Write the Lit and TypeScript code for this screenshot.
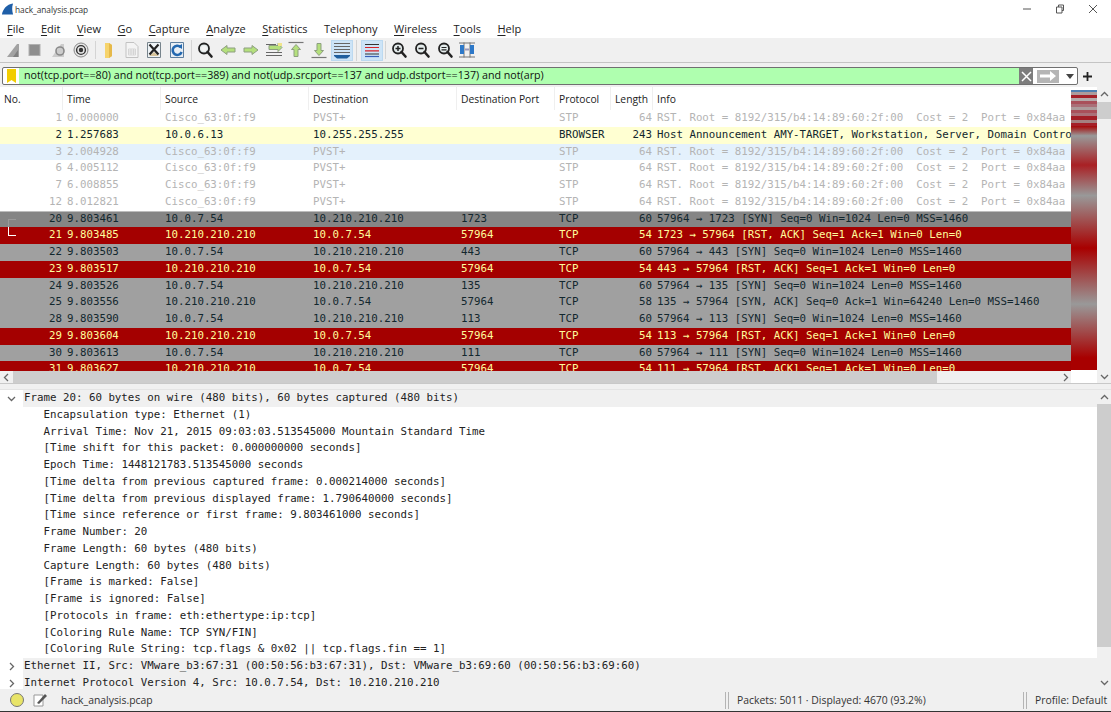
import { LitElement, html, css, svg } from "lit";
import { customElement } from "lit/decorators.js";

type Row = [string, string, string, string, string, string, string, string, string];
const stp = (n: string, t: string, k = "w"): Row => [k, n, t, "Cisco_63:0f:f9", "PVST+", "", "STP", "64", "RST. Root = 8192/315/b4:14:89:60:2f:00  Cost = 2  Port = 0x84aa"];
const a = "10.0.7.54", b = "10.210.210.210";
const rows: Row[] = [
  stp("1", "0.000000"),
  ["y", "2", "1.257683", "10.0.6.13", "10.255.255.255", "", "BROWSER", "243", "Host Announcement AMY-TARGET, Workstation, Server, Domain Controller"],
  stp("3", "2.004928", "b"),
  stp("6", "4.005112"),
  stp("7", "6.008855"),
  stp("12", "8.012821"),
  ["s", "20", "9.803461", a, b, "1723", "TCP", "60", "57964 → 1723 [SYN] Seq=0 Win=1024 Len=0 MSS=1460"],
  ["r2", "21", "9.803485", b, a, "57964", "TCP", "54", "1723 → 57964 [RST, ACK] Seq=1 Ack=1 Win=0 Len=0"],
  ["g", "22", "9.803503", a, b, "443", "TCP", "60", "57964 → 443 [SYN] Seq=0 Win=1024 Len=0 MSS=1460"],
  ["r2", "23", "9.803517", b, a, "57964", "TCP", "54", "443 → 57964 [RST, ACK] Seq=1 Ack=1 Win=0 Len=0"],
  ["g", "24", "9.803526", a, b, "135", "TCP", "60", "57964 → 135 [SYN] Seq=0 Win=1024 Len=0 MSS=1460"],
  ["g", "25", "9.803556", b, a, "57964", "TCP", "58", "135 → 57964 [SYN, ACK] Seq=0 Ack=1 Win=64240 Len=0 MSS=1460"],
  ["g", "28", "9.803590", a, b, "113", "TCP", "60", "57964 → 113 [SYN] Seq=0 Win=1024 Len=0 MSS=1460"],
  ["r2", "29", "9.803604", b, a, "57964", "TCP", "54", "113 → 57964 [RST, ACK] Seq=1 Ack=1 Win=0 Len=0"],
  ["g", "30", "9.803613", a, b, "111", "TCP", "60", "57964 → 111 [SYN] Seq=0 Win=1024 Len=0 MSS=1460"],
  ["r2", "31", "9.803627", b, a, "57964", "TCP", "54", "111 → 57964 [RST, ACK] Seq=1 Ack=1 Win=0 Len=0"],
];
const details = [
  "Encapsulation type: Ethernet (1)",
  "Arrival Time: Nov 21, 2015 09:03:03.513545000 Mountain Standard Time",
  "[Time shift for this packet: 0.000000000 seconds]",
  "Epoch Time: 1448121783.513545000 seconds",
  "[Time delta from previous captured frame: 0.000214000 seconds]",
  "[Time delta from previous displayed frame: 1.790640000 seconds]",
  "[Time since reference or first frame: 9.803461000 seconds]",
  "Frame Number: 20",
  "Frame Length: 60 bytes (480 bits)",
  "Capture Length: 60 bytes (480 bits)",
  "[Frame is marked: False]",
  "[Frame is ignored: False]",
  "[Protocols in frame: eth:ethertype:ip:tcp]",
  "[Coloring Rule Name: TCP SYN/FIN]",
  "[Coloring Rule String: tcp.flags & 0x02 || tcp.flags.fin == 1]",
];
const menus: [string, string][] = [["F", "ile"], ["E", "dit"], ["V", "iew"], ["G", "o"], ["C", "apture"], ["A", "nalyze"], ["S", "tatistics"], ["", "Telephony"], ["W", "ireless"], ["T", "ools"], ["H", "elp"]];

const ic = (c: unknown, w = 18) => html`<svg class="ic" width=${w} height="18" viewBox="0 0 18 18">${c}</svg>`;
const lens = (inner: unknown = "") => svg`<circle cx="8" cy="7.500" r="5" fill="#e4ecec" stroke="#222" stroke-width="1.800"/><path d="M11.500 11l4 4.500" stroke="#222" stroke-width="2.600" stroke-linecap="round"/>${inner}`;
const arrowL = svg`<path d="M2 9l6-4.500v2.500h8v4H8v2.500z" fill="#b4e07c" stroke="#8d9f80"/>`;
const arrowR = svg`<path d="M16 9l-6-4.500v2.500H2v4h8v2.500z" fill="#b4e07c" stroke="#8d9f80"/>`;

const tools = [
  [ic(svg`<path d="M3 16L13 3h2v13z" fill="#a2a2a2"/><path d="M9 16l5-7v7z" fill="#808080"/>`), ic(svg`<rect x="3" y="3.500" width="11" height="11" fill="#8e8e8e" stroke="#b0b0b0"/>`), ic(svg`<path d="M3 16L12 3h3v13z" fill="#cccccc"/><circle cx="11" cy="10" r="4" fill="none" stroke="#8a8a8a" stroke-width="1.600"/>`), ic(svg`<circle cx="9" cy="9" r="7" fill="#e6e6e6" stroke="#888"/><circle cx="9" cy="9" r="4.400" fill="none" stroke="#333" stroke-width="1.400"/><circle cx="9" cy="9" r="2.200" fill="#333"/>`)],
  [ic(svg`<path d="M5 2h4l3 2v11l-3 2H5z" fill="#f6d36b"/><path d="M9 2l3 2v11l-3 2z" fill="#e6b94a"/>`), ic(svg`<path d="M3 1.500h8l4 4v11H3z" fill="#f4f4f4" stroke="#c2c2c2"/><path d="M5.500 8h7v6h-7zM5.500 10h7M5.500 12h7M8 8v6M10.500 8v6" fill="none" stroke="#cfcfcf" stroke-width=".8"/>`), ic(svg`<path d="M2.500 1.500h13v15h-13z" fill="#eef3f6" stroke="#77848c"/><path d="M4 15l5-4 5 4z" fill="#d9c69c"/><path d="M4.500 3.500l9 10M13.500 3.500l-9 10" stroke="#222" stroke-width="2.200"/>`), ic(svg`<path d="M2.500 1.500h13v15h-13z" fill="#e8eef4" stroke="#5e7f9f"/><path d="M12.500 6A4.600 4.600 0 1 0 13.600 11" fill="none" stroke="#2368b0" stroke-width="2.600"/><path d="M10 5.500l4-2.500v5z" fill="#2368b0"/>`)],
  [ic(lens(svg`<circle cx="8" cy="7.500" r="2.800" fill="#f4f4f4"/>`)), ic(arrowL), ic(arrowR), ic(svg`<path d="M1 3.500h10M1 14.500h16M1 11.500h16" stroke="#666"/><path d="M4 4.500h9v-2l4 4-4 4v-2H4z" fill="#b4e07c" stroke="#8d9f80"/><rect x="13" y="2" width="4" height="3" fill="#f1e58c"/>`), ic(svg`<path d="M1.500 1.500h15" stroke="#777" stroke-width="1.200"/><path d="M9 3.500l4.500 5H11v7H7v-7H4.500z" fill="#b4e07c" stroke="#8d9f80"/>`), ic(svg`<path d="M1.500 16.500h15" stroke="#777" stroke-width="1.200"/><path d="M9 14.500l4.500-5H11v-7H7v7H4.500z" fill="#b4e07c" stroke="#8d9f80"/>`), html`<span class="on">${ic(svg`<path d="M1 2.500h16M1 5.500h16M1 8.500h16M1 11.500h16" stroke="#666"/><path d="M1 14h16v1l-3 2.500H4L1 15z" fill="#1f5f9e"/>`)}</span>`],
  [html`<span class="on">${ic(svg`<path d="M2 3.500h14M2 13h14" stroke="#333" stroke-width="1.100"/><path d="M2 6.500h14M2 9.800h14" stroke="#d8232a" stroke-width="1.200"/><path d="M2 15.500h14" stroke="#3a62b8" stroke-width="1.200"/>`)}</span>`],
  [ic(lens(svg`<path d="M5.500 7.500h5M8 5v5" stroke="#222" stroke-width="1.500"/>`)), ic(lens(svg`<path d="M5.500 7.500h5" stroke="#222" stroke-width="1.500"/>`)), ic(lens(svg`<path d="M5.500 6.500h5M5.500 8.800h5" stroke="#222" stroke-width="1.200"/>`)), ic(svg`<path d="M1 2h16M1 16h16M6 1.500v15M12 1.500v15" stroke="#777"/><rect x="2" y="4" width="4" height="9" fill="#2d78c8"/><rect x="12" y="4" width="4" height="9" fill="#2d78c8"/><path d="M7 8.500h4" stroke="#99b" stroke-width="2"/>`)],
];

const stripes = ["s-b", "s-m", "s-r", "s-l", "s-p", "s-q", "s-m", "s-p", "s-q", "s-r4", "s-o", "s-r"];

@customElement("app-root")
export class AppRoot extends LitElement {
  static styles = css`
    :host { display: flex; flex-direction: column; width: 1111px; height: 712px; overflow: hidden; background: #fff; font-family: "Open Sans", "Noto Sans", sans-serif; color: #222; }
    .title { height: 18px; flex: none; display: flex; align-items: center; padding-left: 1px; font-size: 8.300px; color: #333; gap: 1px; }
    .title .sp { flex: 1; }
    .winbtns { display: flex; align-items: center; gap: 23px; padding: 0 13px 0 0; }
    .menu { height: 20px; flex: none; display: flex; align-items: center; padding-left: 7px; gap: 16.500px; font-size: 11px; color: #222; }
    .menu u { text-underline-offset: 1.500px; }
    .toolbar { height: 24px; flex: none; display: flex; align-items: center; background: #f0f0f0; padding-left: 2.500px; }
    .group { display: flex; align-items: center; gap: 2.800px; }
    .ic { display: block; flex: none; }
    .group + .group { margin-left: 4px; padding-left: 3px; border-left: 1px solid #d4d4d4; }
    .group:nth-child(4) { padding-left: 5px; }
    .group:nth-child(5) { margin-left: 3px; }
    .group > .ic { width: 20px; padding: 0 1px; box-sizing: border-box; }
    .on { width: 22px; height: 21px; margin: 0 -1px; display: flex; justify-content: center; align-items: center; background: #cde4f7; outline: 1px solid #bcd9f0; outline-offset: -1px; }
    .filterbar { height: 25px; flex: none; display: flex; align-items: flex-start; background: #f0f0f0; border-top: 1px solid #c4c4c4; box-sizing: border-box; padding: 4px 0 0 2px; }
    .filter { width: 1076px; height: 18px; box-sizing: border-box; display: flex; align-items: center; border: 1.500px solid #707070; border-radius: 2px; background: #fff; overflow: hidden; }
    .mark { width: 16px; display: flex; justify-content: center; flex: none; }
    .ftext { width: 1000px; flex: none; height: 100%; background: #afffaf; font-size: 10.700px; line-height: 15px; padding-left: 5px; box-sizing: border-box; color: #111; white-space: nowrap; overflow: hidden; }
    .fbtns { display: flex; align-items: center; height: 100%; flex: 1; }
    .xbtn { width: 14px; height: 100%; background: #7d7d7d; display: flex; align-items: center; justify-content: center; flex: none; }
    .gbtn { width: 22px; height: 13px; margin-left: 4px; background: #b5b5b5; display: flex; align-items: center; justify-content: center; flex: none; }
    .drop { flex: 1; height: 100%; display: flex; align-items: center; justify-content: center; padding-left: 3px; }
    .plus { margin-left: 5px; display: flex; height: 18px; align-items: center; }
    .list { height: 296px; flex: none; display: flex; overflow: hidden; }
    .listmain { flex: 1; min-width: 0; display: flex; flex-direction: column; }
    .head { display: grid; grid-template-columns: 62px 98px 148px 148px 98px 56px 42px 1fr; white-space: nowrap; height: 23px; flex: none; font-size: 10.300px; color: #222; }
    .head span { padding: 3px 0 0 4px; border-left: 1px solid #efefef; line-height: 19px; box-sizing: border-box; overflow: hidden; }
    .head span:first-child { border: 0; }
    .rows { flex: 1; min-height: 0; overflow: hidden; font-family: "DejaVu Sans Mono", monospace; font-size: 10.780px; }
    .row { display: grid; grid-template-columns: 62px 98px 148px 148px 98px 62px 36px 1fr; white-space: pre; height: 16.780px; line-height: 16.780px; box-sizing: border-box; overflow: hidden; position: relative; }
    .row span { padding-left: 5px; overflow: hidden; }
    .row .rt { text-align: right; padding: 0; }
    .w { background: #fff; color: #b4b4b4; }
    .b { background: #e4f1fc; color: #b4b4b4; }
    .y { background: #ffffd2; color: #12272e; }
    .s { background: #858585; color: #12272e; border-top: 1px solid #bdbdbd; line-height: 14.500px; }
    .g { background: #a0a0a0; color: #12272e; }
    .r2 { background: #a40000; color: #fffc9c; }
    .cstart { position: absolute; left: 8px; top: 7px; width: 7px; height: 12px; border-left: 1px solid #9a9a9a; border-top: 1px solid #9a9a9a; }
    .cend { position: absolute; left: 8px; top: 0; width: 7px; height: 8px; border-left: 1px solid #fff; border-bottom: 1px solid #fff; }
    .hscroll { height: 12px; flex: none; background: #f0f0f0; display: flex; align-items: center; }
    .hscroll .thumb { width: 924px; height: 12px; background: #cdcdcd; margin-left: 1px; }
    .hscroll .sp { flex: 1; }
    .arr { width: 12px; height: 12px; display: flex; align-items: center; justify-content: center; flex: none; }
    .mini { width: 26px; flex: none; height: 280px; margin-top: 3px; display: flex; flex-direction: column; overflow: hidden; box-shadow: inset 1px 0 #d9b9b9, inset -1px 0 #d9b9b9; }
    .mini i { display: block; flex: none; height: 3px; }
    .s-b { background: #4f7fb0; height: 2px !important; }
    .s-m { background: #ad9c9c; }
    .s-r { background: #a52028; }
    .s-l { background: #b5aaaa; }
    .s-p { background: #a9505a; }
    .s-q { background: #aa7078; }
    .s-r4 { background: #a21e26; height: 4px !important; }
    .s-o { background: #a58080; }
    .mini .grad { flex: 1; height: auto; background: linear-gradient(#a60808 0%, #999 4%, #a92024 16%, #999 28.500%, #a80000 50%, #999 73%, #a80000 95%, #a80000 100%); }
    .vs { width: 14px; flex: none; background: #f0f0f0; display: flex; flex-direction: column; height: 100%; }
    .vs .thumb { background: #cdcdcd; }
    .vs .t1 { height: 17px; margin-top: 1px; }
    .vs .t2 { height: 243px; }
    .vs .sp { flex: 1; }
    .vs .arr { width: 14px; height: 14px; }
    .sep { height: 7px; flex: none; background: #f0f0f0; border-top: 1px solid #c8c8c8; border-bottom: 1px solid #e4e4e4; box-sizing: border-box; }
    .detail { height: 299px; flex: none; display: flex; overflow: hidden; }
    .dmain { flex: 1; min-width: 0; overflow: hidden; font-family: "DejaVu Sans Mono", monospace; font-size: 10.790px; color: #222; white-space: nowrap; }
    .dl { height: 16.780px; line-height: 16.780px; padding-left: 43.500px; }
    .dh { display: flex; height: 16.780px; line-height: 16.780px; }
    .dh .tw { width: 23px; flex: none; display: flex; align-items: center; justify-content: center; }
    .dh .tx { flex: 1; background: #f0f0f0; padding-left: 1px; }
    .status { height: 23px; flex: none; background: #f0f0f0; display: flex; align-items: center; font-size: 10.400px; color: #333; border-bottom: 1px solid #333; box-sizing: border-box; }
    .dot { width: 14px; height: 14px; border-radius: 50%; background: #e8e468; border: 1px solid #777; box-sizing: border-box; margin-left: 10px; flex: none; }
    .edit { margin-left: 8px; flex: none; }
    .file { flex: 1; margin-left: 13px; }
    .grip { width: 4px; height: 17px; border-left: 1px solid #b4b4b4; border-right: 1px solid #b4b4b4; box-sizing: border-box; flex: none; }
    .pkts { width: 294px; padding-left: 8px; box-sizing: border-box; flex: none; }
    .prof { padding-left: 8px; width: 84px; box-sizing: border-box; flex: none; white-space: nowrap; }
  `;

  private chevron(d: string) {
    return html`<svg width="9" height="9" viewBox="0 0 9 9"><path d=${d} fill="none" stroke="#666" stroke-width="1.300"/></svg>`;
  }

  render() {
    const up = this.chevron("M1 6l3.500-3.500L8 6");
    const down = this.chevron("M1 3l3.500 3.500L8 3");
    const left = this.chevron("M6 1L2.500 4.500 6 8");
    const right = this.chevron("M3 1l3.500 3.500L3 8");
    return html`
      <div class="title">
        <svg width="13" height="14" viewBox="0 0 14 14"><path d="M1 13C2 7 6 2 13 1c-1.500 4-1 8 0 12z" fill="#1f5fa8"/></svg>
        <span>hack_analysis.pcap</span><span class="sp"></span>
        <div class="winbtns">
          <svg width="10" height="10" viewBox="0 0 10 10"><path d="M1 5h8" stroke="#555"/></svg>
          <svg width="10" height="10" viewBox="0 0 10 10"><path d="M1.500 3h5.500v6h-5.500zM3.500 3V1h5v5.500H7" fill="none" stroke="#555"/></svg>
          <svg width="10" height="10" viewBox="0 0 10 10"><path d="M1 1l8 8M9 1L1 9" stroke="#555"/></svg>
        </div>
      </div>
      <div class="menu">${menus.map(([u, r]) => html`<span>${u ? html`<u>${u}</u>` : ""}${r}</span>`)}</div>
      <div class="toolbar">${tools.map((g) => html`<div class="group">${g}</div>`)}</div>
      <div class="filterbar">
        <div class="filter">
          <div class="mark"><svg width="9" height="14" viewBox="0 0 9 14"><path d="M0 0h9v14l-4.500-3L0 14z" fill="#f2cd00"/></svg></div>
          <div class="ftext">not(tcp.port==80) and not(tcp.port==389) and not(udp.srcport==137 and udp.dstport==137) and not(arp)</div>
          <div class="fbtns">
            <div class="xbtn"><svg width="11" height="11" viewBox="0 0 11 11"><path d="M1 1l9 9M10 1l-9 9" stroke="#fff" stroke-width="1.500"/></svg></div>
            <div class="gbtn"><svg width="18" height="10" viewBox="0 0 18 10"><path d="M1 3.500h10V0l6 5-6 5V6.500H1z" fill="#fff"/></svg></div>
            <div class="drop"><svg width="8" height="5" viewBox="0 0 8 5"><path d="M0 0h8L4 5z" fill="#444"/></svg></div>
          </div>
        </div>
        <div class="plus"><svg width="9" height="9" viewBox="0 0 9 9"><path d="M4.500 0v9M0 4.500h9" stroke="#222" stroke-width="1.800"/></svg></div>
      </div>
      <div class="list">
        <div class="listmain">
          <div class="head">
            <span>No.</span><span>Time</span><span>Source</span><span>Destination</span><span>Destination Port</span><span>Protocol</span><span>Length</span><span>Info</span>
          </div>
          <div class="rows">
            ${rows.map((r) => {
              const [k, n, t, s, d, p, pr, l, inf] = r;
              return html`<div class="row ${k}">
                ${n === "20" ? html`<i class="cstart"></i>` : ""}${n === "21" ? html`<i class="cend"></i>` : ""}
                <span class="rt">${n}</span><span>${t}</span><span>${s}</span><span>${d}</span><span>${p}</span><span>${pr}</span><span class="rt">${l}</span><span>${inf}</span>
              </div>`;
            })}
          </div>
          <div class="hscroll"><div class="arr">${left}</div><div class="thumb"></div><span class="sp"></span><div class="arr">${right}</div></div>
        </div>
        <div class="mini">${stripes.map((c) => html`<i class=${c}></i>`)}<i class="grad"></i></div>
        <div class="vs"><div class="arr">${up}</div><div class="thumb t1"></div><span class="sp"></span><div class="arr">${down}</div></div>
      </div>
      <div class="sep"></div>
      <div class="detail">
        <div class="dmain">
          <div class="dh"><span class="tw">${down}</span><span class="tx">Frame 20: 60 bytes on wire (480 bits), 60 bytes captured (480 bits)</span></div>
          ${details.map((d) => html`<div class="dl">${d}</div>`)}
          <div class="dh"><span class="tw">${right}</span><span class="tx">Ethernet II, Src: VMware_b3:67:31 (00:50:56:b3:67:31), Dst: VMware_b3:69:60 (00:50:56:b3:69:60)</span></div>
          <div class="dh"><span class="tw">${right}</span><span class="tx">Internet Protocol Version 4, Src: 10.0.7.54, Dst: 10.210.210.210</span></div>
        </div>
        <div class="vs"><div class="arr">${up}</div><div class="thumb t2"></div><span class="sp"></span><div class="arr">${down}</div></div>
      </div>
      <div class="status">
        <span class="dot"></span>
        <svg class="edit" width="16" height="16" viewBox="0 0 16 16"><path d="M2 3h9v11H2z" fill="#fff" stroke="#999"/><path d="M5 11l8-9 2 2-8 8z" fill="#555"/></svg>
        <span class="file">hack_analysis.pcap</span>
        <span class="grip"></span><span class="pkts">Packets: 5011 · Displayed: 4670 (93.2%)</span>
        <span class="grip"></span><span class="prof">Profile: Default</span>
      </div>
    `;
  }
}
